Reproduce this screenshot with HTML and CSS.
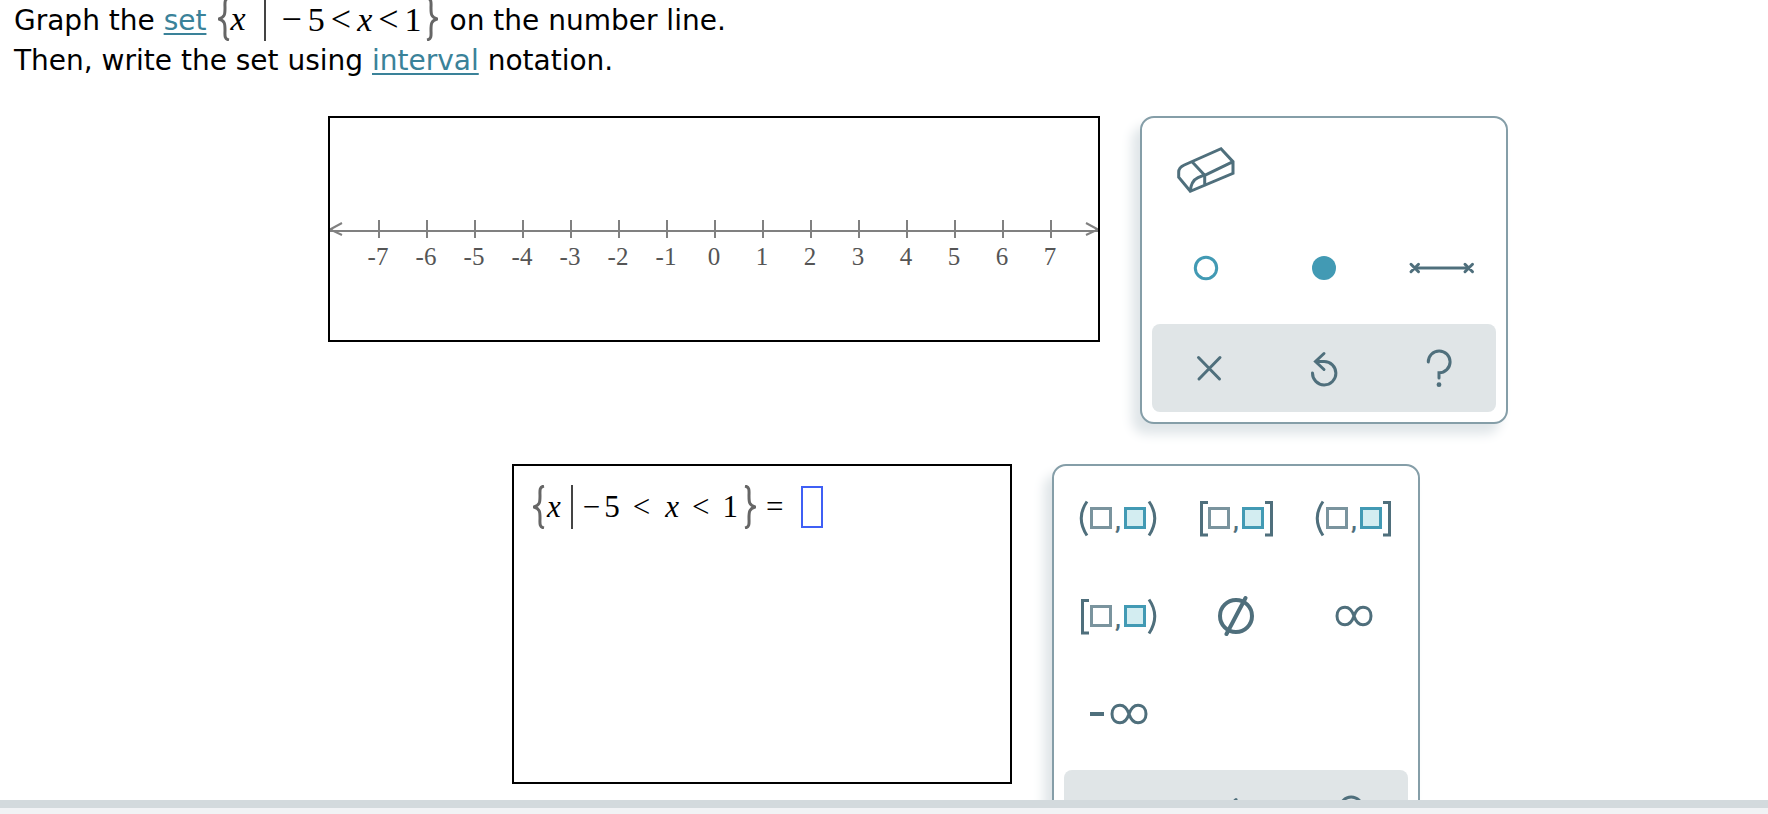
FILE: index.html
```html
<!DOCTYPE html>
<html lang="en">
<head>
<meta charset="utf-8">
<title>Set and interval notation</title>
<link rel="stylesheet" href="styles.css">
</head>
<body>
<svg class="defs" aria-hidden="true">
  <defs>
    <symbol id="brace-open" viewBox="0 0 12 44"><path d="M11 1C6 2 7 6 7 11C7 17 7 20 1 22C7 24 7 27 7 33C7 38 6 42 11 43"/></symbol>
    <symbol id="brace-close" viewBox="0 0 12 44"><path d="M1 1C6 2 5 6 5 11C5 17 5 20 11 22C5 24 5 27 5 33C5 38 6 42 1 43"/></symbol>
    <symbol id="boxes" viewBox="0 0 80 40">
      <rect class="box-grey" x="13.500" y="10.500" width="19" height="19"/>
      <text class="comma" x="37" y="31">,</text>
      <rect class="box-teal" x="47.500" y="10.500" width="19" height="19"/>
    </symbol>
    <symbol id="undo" viewBox="0 0 40 44"><path d="M8.500 27A11.700 11.700 0 1 0 20 15.500H11.500M20 7.500L11.500 15.500L20 23.500"/></symbol>
    <symbol id="help" viewBox="0 0 40 44"><path d="M9.300 16A10.900 10.900 0 1 1 20 26.700V32"/><circle class="dot" cx="20" cy="38.700" r="2.400"/></symbol>
    <symbol id="clear" viewBox="0 0 40 44"><path d="M9.500 11.500L30.500 33M31 11.500L10 33"/></symbol>
    <symbol id="infinity" viewBox="0 0 38 22"><path d="M19 11C17 5 14 2.200 10 2.200C5 2.200 2 6 2 11S5 19.800 10 19.800C14 19.800 17 17 19 11C21 5 24 2.200 28 2.200C33 2.200 36 6 36 11S33 19.800 28 19.800C24 19.800 21 17 19 11C17 5 14 2.200 10 2.200"/></symbol>
  </defs>
</svg>
<main class="content">
  <section class="prompt">
    <div class="prompt-line">
      <span>Graph the <a href="#set">set</a></span>
      <span class="formula formula-prompt">
        <svg class="brace"><use href="#brace-open"/></svg><i>x</i><span class="bar"></span><span class="terms"><span class="op">−</span><span>5</span><span class="op">&lt;</span><i>x</i><span class="op">&lt;</span><span>1</span></span><svg class="brace"><use href="#brace-close"/></svg>
      </span>
      <span>on the number line.</span>
    </div>
    <div class="prompt-line"><span>Then, write the set using <a href="#interval">interval</a> notation.</span></div>
  </section>

  <section class="row row-graph">
    <div class="frame number-line">
      <svg class="axis" viewBox="0 0 768 222" width="768" height="222" role="img" aria-label="Number line from -7 to 7">
        <path class="axis-line" d="M0 113H768"/>
        <path class="axis-ticks" d="M49 102v18M97 102v18M145 102v18M193 102v18M241 102v18M289 102v18M337 102v18M385 102v18M433 102v18M481 102v18M529 102v18M577 102v18M625 102v18M673 102v18M721 102v18"/>
        <path class="axis-arrows" d="M12 105L0 111.500L12 117M756 105L768 111.500L756 117"/>
        <g class="axis-labels">
          <text x="48" y="147">-7</text><text x="96" y="147">-6</text><text x="144" y="147">-5</text><text x="192" y="147">-4</text><text x="240" y="147">-3</text><text x="288" y="147">-2</text><text x="336" y="147">-1</text><text x="384" y="147">0</text><text x="432" y="147">1</text><text x="480" y="147">2</text><text x="528" y="147">3</text><text x="576" y="147">4</text><text x="624" y="147">5</text><text x="672" y="147">6</text><text x="720" y="147">7</text>
        </g>
      </svg>
    </div>
    <div class="panel">
      <div class="tools">
        <button class="wide" aria-label="Eraser"><svg class="icon eraser" width="60" height="48" viewBox="0 0 60 48"><path d="M8.300 19L45 2.700L57 15.700V27.300L14.300 45.300L2.700 31.300V26Q2.700 21.500 8.300 19ZM16.300 16L28.700 29.300V39.300M57 15.700L28.700 29.300M28.700 28.800L22 31.700Q15 35 14.300 45.300"/></svg></button>
        <button aria-label="Open point"><svg class="icon teal" width="28" height="28"><circle cx="14" cy="14" r="10.700"/></svg></button>
        <button aria-label="Closed point"><svg class="icon" width="28" height="28"><circle class="disc" cx="14" cy="14" r="12"/></svg></button>
        <button aria-label="Segment"><svg class="icon" width="80" height="20"><path class="seg-halo" d="M14 10H66"/><path class="seg" d="M13 10H67"/><path d="M9 6.300L16.500 13.700M16.500 6.300L9 13.700M63 6.300L70.500 13.700M70.500 6.300L63 13.700"/></svg></button>
      </div>
      <div class="toolbar">
        <button aria-label="Clear"><svg class="icon" width="40" height="44"><use href="#clear"/></svg></button>
        <button aria-label="Undo"><svg class="icon" width="40" height="44"><use href="#undo"/></svg></button>
        <button aria-label="Help"><svg class="icon" width="40" height="44"><use href="#help"/></svg></button>
      </div>
    </div>
  </section>

  <section class="row row-answer">
    <div class="frame answer">
      <div class="formula formula-answer">
        <svg class="brace"><use href="#brace-open"/></svg><i>x</i><span class="bar"></span><span class="terms"><span class="negative"><span>−</span><span>5</span></span><span>&lt;</span><i>x</i><span>&lt;</span><span>1</span></span><svg class="brace"><use href="#brace-close"/></svg><span class="equals">=</span>
        <input class="slot" type="text" aria-label="Interval">
      </div>
    </div>
    <div class="panel">
      <div class="tools">
        <button aria-label="Open interval"><svg class="icon fence" width="80" height="40"><path d="M9 3.500Q-2.500 20 9 37.500M71 3.500Q82.500 20 71 37.500"/><use href="#boxes"/></svg></button>
        <button aria-label="Closed interval"><svg class="icon fence" width="80" height="40"><path d="M12 4.500H5.500V37H12M69 4.500H75.500V37H69"/><use href="#boxes"/></svg></button>
        <button aria-label="Left-open interval"><svg class="icon fence" width="80" height="40"><path d="M9 3.500Q-2.500 20 9 37.500M69 4.500H75.500V37H69"/><use href="#boxes"/></svg></button>
        <button aria-label="Right-open interval"><svg class="icon fence" width="80" height="40"><path d="M11 4.500H4.500V37H11M71 3.500Q82.500 20 71 37.500"/><use href="#boxes"/></svg></button>
        <button aria-label="Empty set"><svg class="icon empty-set" width="40" height="40"><circle cx="20" cy="20" r="16"/><path d="M10.500 38L29.500 2"/></svg></button>
        <button aria-label="Infinity"><svg class="icon" width="38" height="22"><use href="#infinity"/></svg></button>
        <button aria-label="Negative infinity"><svg class="icon" width="80" height="22"><path class="minus" d="M12 11H26"/><use href="#infinity" x="32" width="38" height="22"/></svg></button>
      </div>
      <div class="toolbar">
        <button aria-label="Clear"><svg class="icon" width="40" height="44"><use href="#clear"/></svg></button>
        <button aria-label="Undo"><svg class="icon" width="40" height="44"><use href="#undo"/></svg></button>
        <button aria-label="Help"><svg class="icon" width="40" height="44"><use href="#help"/></svg></button>
      </div>
    </div>
  </section>
</main>
<footer class="bottom-bar"></footer>
</body>
</html>
```
FILE: styles.css
```css
* { box-sizing: border-box; }

body {
  margin: 0;
  height: 100vh;
  display: flex;
  flex-direction: column;
  background: #fff;
  color: #000;
  font-family: "DejaVu Sans", Verdana, sans-serif;
  font-size: 28px;
}

.defs { position: absolute; width: 0; height: 0; }

.content { flex: 1; min-height: 0; overflow: hidden; }

.bottom-bar {
  flex: none;
  height: 14px;
  background: #f1f3f5;
  border-top: 8px solid #d3dadd;
}

/* Question text */
.prompt { padding: 1px 0 0 14px; margin-bottom: 35px; }

.prompt-line {
  display: flex;
  align-items: center;
  gap: 12px;
  height: 40px;
  line-height: 40px;
  white-space: nowrap;
}

.prompt a {
  color: #3a8299;
  text-decoration: underline;
  text-decoration-thickness: 2px;
  text-underline-offset: 3px;
}

/* Formulas */
.formula {
  display: flex;
  align-items: center;
  font-family: "Liberation Serif", "Times New Roman", serif;
}

.formula .bar { width: 2px; height: 44px; background: #444; }

.terms { display: flex; align-items: baseline; }

.brace {
  width: 12px;
  height: 44px;
  fill: none;
  stroke: #666;
  stroke-width: 3px;
}

.formula-prompt { font-size: 34px; line-height: 32px; margin-bottom: 4px; }
.formula-prompt .bar { margin: 0 16px 0 18px; }
.formula-prompt .terms { gap: 6px; margin-right: 4px; }
.formula-prompt .op { font-size: 36px; }

.formula-answer { font-size: 31px; line-height: 44px; }
.formula-answer i { margin-left: 2px; }
.formula-answer .bar { margin: 0 10px; }
.formula-answer .terms { gap: 13px; margin-right: 6px; }
.negative { display: flex; gap: 4px; }
.equals { margin: 0 18px 0 10px; }

.slot {
  width: 22px;
  height: 42px;
  padding: 0;
  border: 2px solid #3f5ff5;
  background: #fff;
  outline: none;
}

/* Rows */
.row {
  display: flex;
  justify-content: center;
  align-items: flex-start;
  gap: 40px;
  margin-bottom: 40px;
}

.row-graph { padding-left: 68px; }
.row-answer { padding-left: 164px; }

.frame { border: 2px solid #000; }

.axis { display: block; }
.axis path { fill: none; stroke: #808080; stroke-width: 2px; }
.axis-labels {
  font-family: "Liberation Serif", "Times New Roman", serif;
  font-size: 25px;
  fill: #555;
  text-anchor: middle;
}

.answer { width: 500px; min-height: 320px; padding: 19px; }

/* Tool panels */
.panel {
  width: 368px;
  padding: 3px 10px 10px;
  border: 2px solid #859ea8;
  border-radius: 14px;
  background: #fff;
  box-shadow: -8px 10px 12px #dfe5e8;
}

.tools {
  display: grid;
  grid-template-columns: repeat(3, 118px);
  grid-auto-rows: 98px;
  justify-content: center;
  margin-bottom: 7px;
}

.toolbar {
  display: grid;
  grid-template-columns: repeat(3, 1fr);
  height: 88px;
  border-radius: 8px;
  background: #e0e5e7;
}

button {
  display: flex;
  align-items: center;
  justify-content: center;
  padding: 0;
  border: 0;
  background: none;
  cursor: pointer;
}

.wide { grid-column: 1 / -1; justify-content: flex-start; padding-left: 29px; }

.icon {
  display: block;
  fill: none;
  stroke: #4f6f7c;
  stroke-width: 3px;
  stroke-linecap: round;
}

.teal { stroke: #429ab4; }
.disc { fill: #429ab4; stroke: none; }
.dot { fill: #4f6f7c; stroke: none; }
.seg-halo { stroke: #a9bac1; stroke-width: 4px; stroke-linecap: butt; }
.seg { stroke-width: 2px; }
.fence { stroke-linecap: butt; stroke-width: 3px; }
.box-grey { stroke: #7a949e; stroke-width: 3px; }
.box-teal { stroke: #429ab4; stroke-width: 3px; fill: #d3edf1; }
.comma {
  fill: #4f6f7c;
  stroke: none;
  font-family: Roboto, sans-serif;
  font-size: 24px;
  font-weight: 700;
}
.empty-set { stroke-width: 4px; }
.minus { stroke-width: 4px; stroke-linecap: butt; }
```
